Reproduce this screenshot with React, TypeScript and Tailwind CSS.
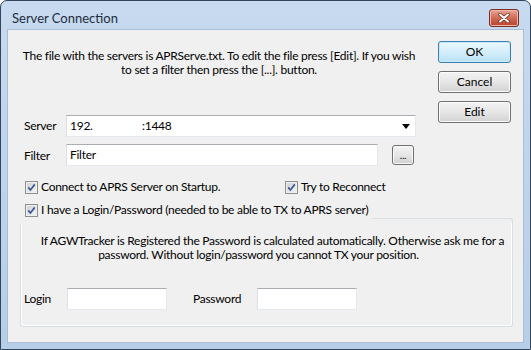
import React from 'react';

const font = "font-['Segoe_UI','Lato',sans-serif]";

function CheckBox() {
  return (
    <svg width="13" height="13" viewBox="0 0 13 13" className="shrink-0">
      <defs>
        <linearGradient id="cbg" x1="0" y1="0" x2="1" y2="1">
          <stop offset="0" stopColor="#cbcfd5" />
          <stop offset="1" stopColor="#f6f6f6" />
        </linearGradient>
      </defs>
      <rect x="0.5" y="0.5" width="12" height="12" fill="#f4f4f4" stroke="#8e8f8f" />
      <rect x="2" y="2" width="9" height="9" fill="url(#cbg)" stroke="#e0e3e8" strokeWidth="0.6" />
      <path d="M3.2 6.4 L5.4 9 L9.8 3.4" fill="none" stroke="#3f5891" strokeWidth="1.7" />
    </svg>
  );
}

function WinButton({ label, primary }: { label: string; primary?: boolean }) {
  return (
    <button
      className={
        'w-[73px] h-[22px] rounded-[3px] border text-[12px] text-black leading-none flex items-center justify-center ' +
        (primary
          ? 'border-[#3c7fb1] bg-gradient-to-b from-[#ecf7fd] via-[#d5eefb] to-[#b9e1f6] shadow-[inset_0_0_0_1px_#c7e9fc]'
          : 'border-[#707070] bg-gradient-to-b from-[#f3f3f3] via-[#e6e6e6] to-[#d2d2d2] shadow-[inset_0_0_0_1px_#fcfcfc]')
      }
    >
      {label}
    </button>
  );
}

function TextBox({ w, text }: { w: string; text?: string }) {
  return (
    <div
      className={
        w +
        ' h-[22px] bg-white border border-[#e3e9ef] border-t-[#abadb3] border-l-[#dbdfe6] flex items-center pl-[3px] text-[12px] text-black'
      }
    >
      {text}
    </div>
  );
}

export default function App() {
  return (
    <div
      className={
        font +
        ' w-[531px] h-[350px] rounded-t-[7px] border border-[#33455a] bg-gradient-to-b from-[#c7daef] via-[#bed4ec] to-[#b7cee8] flex flex-col px-[7px] pb-[7px] overflow-hidden'
      }
    >
      {/* Title bar */}
      <div className="h-[29px] flex items-start justify-between shrink-0">
        <div className="pt-[8px] pl-[4px] text-[13px] leading-[18px] text-[#1e2d3d]">Server Connection</div>
        <div className="mt-[8px] mr-[4px] w-[30px] h-[18px] rounded-[3px] border border-[#7a2b22] bg-gradient-to-b from-[#e7a596] via-[#d06a54] to-[#b8402a] shadow-[inset_0_0_0_1px_#efb8aa] flex items-center justify-center">
          <svg width="12" height="10" viewBox="0 0 12 10">
            <path d="M2 1.5 L10 8.5 M10 1.5 L2 8.5" stroke="#6b2a20" strokeWidth="3.4" strokeLinecap="round" />
            <path d="M2 1.5 L10 8.5 M10 1.5 L2 8.5" stroke="#ffffff" strokeWidth="2" strokeLinecap="round" />
          </svg>
        </div>
      </div>

      {/* Client area */}
      <div className="h-[312px] bg-[#f0f0f0] shadow-[0_0_0_1px_#a9bed6] flex flex-col text-[12px] tracking-[-0.27px] text-black whitespace-nowrap">
        <div className="flex">
          <div className="w-[430px] flex flex-col">
            <div className="mt-[19px] ml-[12px] w-[398px] text-center leading-[14px]">
              The file with the servers is APRServe.txt. To edit the file press [Edit]. If you wish
              <br />
              to set a filter then press the [...]. button.
            </div>
            <div className="mt-[38px] pl-[16px] flex items-center">
              <span className="w-[42px]">Server</span>
              <div className="w-[350px] h-[22px] bg-white border border-[#e3e9ef] border-t-[#abadb3] border-l-[#dbdfe6] flex items-center pl-[3px] pr-[5px]">
                <span className="w-[72px]">192.</span>
                <span className="flex-1">:1448</span>
                <svg width="8" height="5" viewBox="0 0 8 5">
                  <path d="M0 0 H8 L4 5 Z" fill="#000" />
                </svg>
              </div>
            </div>
            <div className="mt-[7px] pl-[16px] flex items-center">
              <span className="w-[42px] pt-[2px]">Filter</span>
              <TextBox w="w-[312px]" text="Filter" />
              <div className="ml-[14px] w-[22px] h-[20px] rounded-[3px] border border-[#707070] bg-gradient-to-b from-[#f3f3f3] via-[#e6e6e6] to-[#d0d0d0] shadow-[inset_0_0_0_1px_#fbfbfb] flex items-center justify-center text-[10px] leading-none pb-[1px]">
                ...
              </div>
            </div>
          </div>
          <div className="pt-[11px] flex flex-col gap-[8px] tracking-normal">
            <WinButton label="OK" primary />
            <WinButton label="Cancel" />
            <WinButton label="Edit" />
          </div>
        </div>

        {/* Checkbox row */}
        <div className="mt-[13px] h-[16px] pl-[17px] flex items-center">
          <div className="w-[260px] flex items-center gap-[3px]">
            <CheckBox />
            <span>Connect to APRS Server on Startup.</span>
          </div>
          <div className="flex items-center gap-[3px]">
            <CheckBox />
            <span>Try to Reconnect</span>
          </div>
        </div>

        {/* Group header */}
        <div className="mt-[7px] ml-[12px] w-[493px] h-[21px] flex">
          <div className="shrink-0 pl-[5px] pr-[4px] h-[16px] flex items-center gap-[3px]">
            <CheckBox />
            <span>I have a Login/Password (needed to be able to TX to APRS server)</span>
          </div>
          <div className="flex-1 self-end h-[5px] border-t border-r border-[#d5dfe5] rounded-tr-[3px]" />
        </div>

        {/* Group box */}
        <div className="ml-[12px] w-[493px] h-[104px] border-l border-r border-b border-[#d5dfe5] rounded-b-[3px] shadow-[inset_1px_0_0_#ffffff,inset_-1px_-1px_0_#ffffff] flex flex-col">
          <div className="pt-[11px] leading-[14px] text-center">
            <div className="pl-[12px]">
              If AGWTracker is Registered the Password is calculated automatically. Otherwise ask me for a
            </div>
            <div className="pr-[16px]">password. Without login/password you cannot TX your position.</div>
          </div>
          <div className="mt-[26px] pl-[3px] flex items-center">
            <span className="w-[43px]">Login</span>
            <TextBox w="w-[100px]" />
            <span className="ml-[26px] w-[64px]">Password</span>
            <TextBox w="w-[100px]" />
          </div>
        </div>
      </div>
    </div>
  );
}
